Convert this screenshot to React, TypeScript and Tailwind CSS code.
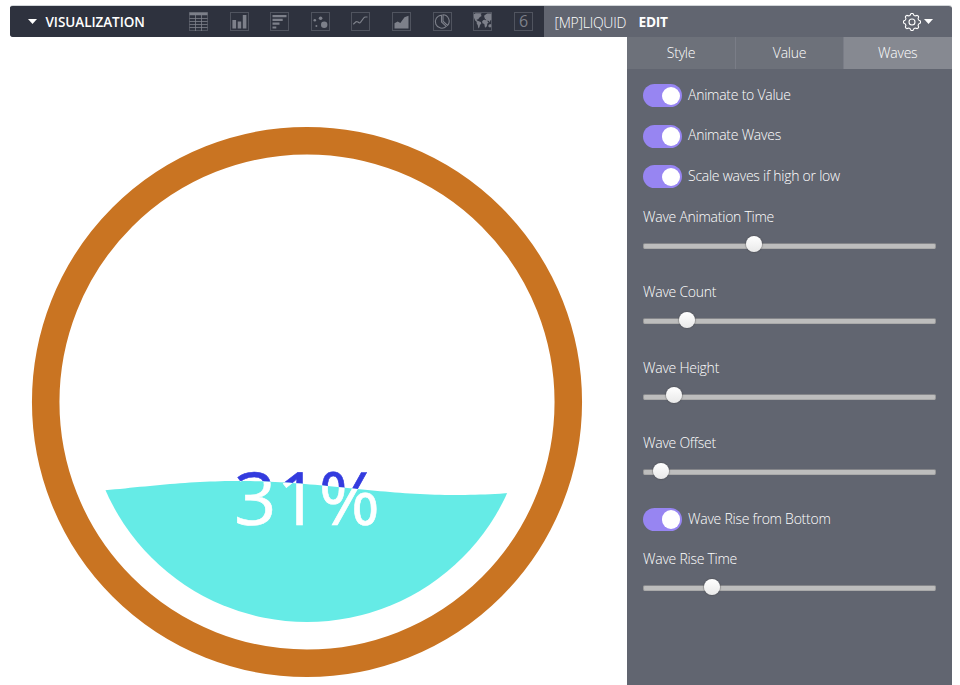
import { useState } from 'react'
import type { ReactNode } from 'react'
import clsx from 'clsx'

const tabs = ['Style', 'Value', 'Waves']

const toggles = ['Animate to Value', 'Animate Waves', 'Scale waves if high or low']

const sliders = [
  { label: 'Wave Animation Time', value: 111 },
  { label: 'Wave Count', value: 44.5 },
  { label: 'Wave Height', value: 31.5 },
  { label: 'Wave Offset', value: 18.5 },
]

const chartIcons: { name: string; glyph: ReactNode }[] = [
  {
    name: 'Table',
    glyph: (
      <>
        <path d="M.5 .5h18v2.8H.5z" fill="currentColor" />
        <path d="M6.5 3v16M12.5 3v16M.5 6.5h18M.5 9.5h18M.5 12.5h18M.5 15.5h18" stroke="currentColor" strokeWidth=".8" />
      </>
    ),
  },
  {
    name: 'Column',
    glyph: <path d="M2.4 8h3.7v8.5H2.4zM7.7 9.6h3.5v6.9H7.7zM12.8 3h3.6v13.5h-3.6z" fill="currentColor" />,
  },
  {
    name: 'Bar',
    glyph: <path d="M2.5 3h14v2.2h-14zM2.5 6.8h10.2V9H2.5zM2.5 10.6h7v2.2h-7zM2.5 14.4h3.8v2.1H2.5z" fill="currentColor" />,
  },
  {
    name: 'Scatterplot',
    glyph: (
      <g fill="currentColor">
        <circle cx="3.8" cy="8.2" r="1.3" />
        <circle cx="9.6" cy="6.2" r="1.8" />
        <circle cx="5.4" cy="14" r="1" />
        <circle cx="13.2" cy="12.8" r="3.2" />
      </g>
    ),
  },
  {
    name: 'Line',
    glyph: <path d="M2.3 12.2 5 9.8c.5-.4 1-.3 1.5 0l1.5.8c.6.3 1.1.2 1.5-.3L12.7 6c.5-.7 1-1 1.8-1h2" fill="none" stroke="currentColor" strokeWidth="1.2" />,
  },
  {
    name: 'Area',
    glyph: <path d="M2.5 16.5v-5.2l3.2-1.8 2.6 1.6L12.5 5.2l4-1.5v12.8z" fill="currentColor" />,
  },
  {
    name: 'Pie',
    glyph: (
      <g fill="none" stroke="currentColor" strokeWidth="1.1">
        <path d="M8.5 3.2a6.5 6.5 0 1 0 4.8 11.2L8.5 10z" />
        <path d="M10 2.8a6.4 6.4 0 0 1 4.6 10.6L10 9.2z" />
      </g>
    ),
  },
  {
    name: 'Map',
    glyph: (
      <path
        d="M.8 2.2 2.5 1.2h5l1.2.6-1 1 1 1.2-1.8 1-1.2 1.4-.7 1.2-1.3-.4.3 1.3 1.2.5 2.6 1 .5 1.4-1.3 1.7-.6 2.2-1 1.2-.6-3.2-1.2-2 .2-1.3-1.7-1.6-1-2.4L.8 4.2zM11.4 5.2l-.3-1.4 1.6-1.2 1.6-1 4-.2v6.4l-1 .8-.5 2-1-1.8-.8.3-.9-.9.6 1.6 1 .4-1.4 1.6-.3 2.2-1.2 1.6-.9-.3-.6-3.4-1.8-.6-.4-1.8 1.2-1.6 1.7-.1 1.2.6-.2-1.2-.8.1zM15.5 13l1.6-1 1.1.6v2.4l-1.2.5-1.6-.8z"
        fill="currentColor"
      />
    ),
  },
  {
    name: 'Single value',
    glyph: (
      <text x="9.5" y="15.2" textAnchor="middle" fontSize="16" fill="currentColor" className="font-['Open_Sans',sans-serif]">
        6
      </text>
    ),
  },
]

function ChartIcon({ name, glyph }: { name: string; glyph: ReactNode }) {
  return (
    <button type="button" title={name} className="text-[#7d808a]">
      <svg viewBox="0 0 19 19" className="block size-[19px] overflow-visible">
        <rect x=".5" y=".5" width="18" height="18" fill="none" stroke="#50545f" />
        {glyph}
      </svg>
    </button>
  )
}

function gearPath() {
  const points: string[] = []
  for (let i = 0; i < 96; i++) {
    const a = (i / 96) * Math.PI * 2
    const r = 7.7 + 0.85 * Math.tanh(2 * Math.cos(a * 8))
    points.push(`${(9 + r * Math.cos(a)).toFixed(2)} ${(9 + r * Math.sin(a)).toFixed(2)}`)
  }
  return `M${points.join('L')}Z`
}

function Caret() {
  return (
    <svg viewBox="0 0 9 5" className="block h-[5px] w-[9px]" fill="#fff">
      <path d="M0 0h9L4.5 5z" />
    </svg>
  )
}

function Toggle({ label }: { label: string }) {
  const [on, setOn] = useState(true)
  return (
    <div className="flex h-[40.6px] items-center gap-[6px]">
      <button
        type="button"
        role="switch"
        aria-checked={on}
        aria-label={label}
        onClick={() => setOn(!on)}
        className={clsx('flex h-[23px] w-[39px] items-center rounded-full px-[2px]', on ? 'justify-end bg-[#9785f2]' : 'justify-start bg-[#8a8d95]')}
      >
        <span className="size-[18.5px] rounded-full bg-white" />
      </button>
      <span className="pb-[3px]">{label}</span>
    </div>
  )
}

function Slider({ label, value }: { label: string; value: number }) {
  return (
    <div className="h-[75.5px]">
      <div className="flex h-[38px] items-center">{label}</div>
      <div className="relative mt-[7.5px] h-[6px] w-[293px] rounded-[2px] border border-t-[#85868a] border-x-[#999] border-b-[#aaa] bg-[#bdbdbd]">
        <span
          className="absolute top-[-7.5px] size-4 -translate-x-1/2 rounded-full bg-linear-to-b from-white to-[#e9e9e9] shadow-[0_0_1px_1px_rgba(70,70,70,0.35)]"
          style={{ left: value - 1.5 }}
        />
      </div>
    </div>
  )
}

// Liquid surface: one sine period across the fill circle
function wavePath() {
  const points: string[] = []
  for (let x = 80; x <= 530; x += 5) {
    const y = 488 - 7 * Math.cos(((x - 238) / 437) * Math.PI * 2)
    points.push(`${x} ${y.toFixed(2)}`)
  }
  return `M${points.join('L')}V640H80Z`
}

function LiquidGauge() {
  return (
    <svg viewBox="0 37 627 648" className="block h-[648px] w-[627px] font-['Open_Sans',sans-serif] tracking-normal">
      <defs>
        <clipPath id="wave">
          <path d={wavePath()} />
        </clipPath>
      </defs>
      <circle cx="307" cy="402" r="261.3" fill="none" stroke="#c97422" strokeWidth="27.5" />
      <text x="307" y="524.5" textAnchor="middle" fontSize="74" fill="#333bde" stroke="#333bde" strokeWidth=".6">
        31%
      </text>
      <g clipPath="url(#wave)">
        <circle cx="307" cy="402" r="220" fill="#65ebe6" />
        <text x="307" y="524.5" textAnchor="middle" fontSize="74" fill="#fff" stroke="#fff" strokeWidth=".6">
          31%
        </text>
      </g>
    </svg>
  )
}

export default function App() {
  const [activeTab, setActiveTab] = useState('Waves')

  return (
    <div className="h-[685px] w-[960px] overflow-hidden bg-white pt-[5px] pr-[8.5px] font-['Open_Sans',sans-serif] text-[14px] tracking-[-0.25px] text-white">
      <header className="ml-[9.5px] flex h-8 overflow-hidden rounded-t-[3px] rounded-bl-[3px] border-t border-[#b4bbbf]/60 bg-[#616570] bg-clip-padding">
        <div className="flex w-[534.5px] items-center bg-[#2e323e]">
          <div className="flex w-[179.5px] items-center gap-[9px] pl-[18px]">
            <Caret />
            <span className="pt-[2px] text-[13.5px] font-semibold tracking-[-0.05px]">VISUALIZATION</span>
          </div>
          <div className="flex gap-[21.6px]">
            {chartIcons.map((icon) => (
              <ChartIcon key={icon.name} {...icon} />
            ))}
          </div>
        </div>
        <div className="flex flex-1 items-center pl-[10.5px]">
          <span className="w-[84px] pt-[2px] text-[14px] font-light">[MP]LIQUID</span>
          <span className="pt-[2px] text-[13.7px] font-bold">EDIT</span>
          <div className="ml-auto flex items-center gap-[3.5px] pr-[18.5px]">
            <svg viewBox="0 0 18 18" className="block size-[18px]" fill="none" stroke="#fff" strokeWidth="1.1">
              <path d={gearPath()} />
              <circle cx="9" cy="9" r="3" />
            </svg>
            <Caret />
          </div>
        </div>
      </header>

      <main className="flex">
        <LiquidGauge />
        <aside className="h-[648px] flex-1 bg-[#616570] font-light">
          <nav className="grid h-8 grid-cols-[109px_108px_1fr]">
            {tabs.map((tab) => (
              <button
                key={tab}
                type="button"
                onClick={() => setActiveTab(tab)}
                className={clsx('border-r border-[#7a7d87] pb-[1px] last:border-r-0', tab === activeTab ? 'bg-[#868991]' : 'bg-[#6d717a]')}
              >
                {tab}
              </button>
            ))}
          </nav>
          <div className="pt-[6.5px] pl-4">
            {toggles.map((label) => (
              <Toggle key={label} label={label} />
            ))}
            {sliders.map((slider) => (
              <Slider key={slider.label} {...slider} />
            ))}
            <Toggle label="Wave Rise from Bottom" />
            <Slider label="Wave Rise Time" value={69} />
          </div>
        </aside>
      </main>
    </div>
  )
}
